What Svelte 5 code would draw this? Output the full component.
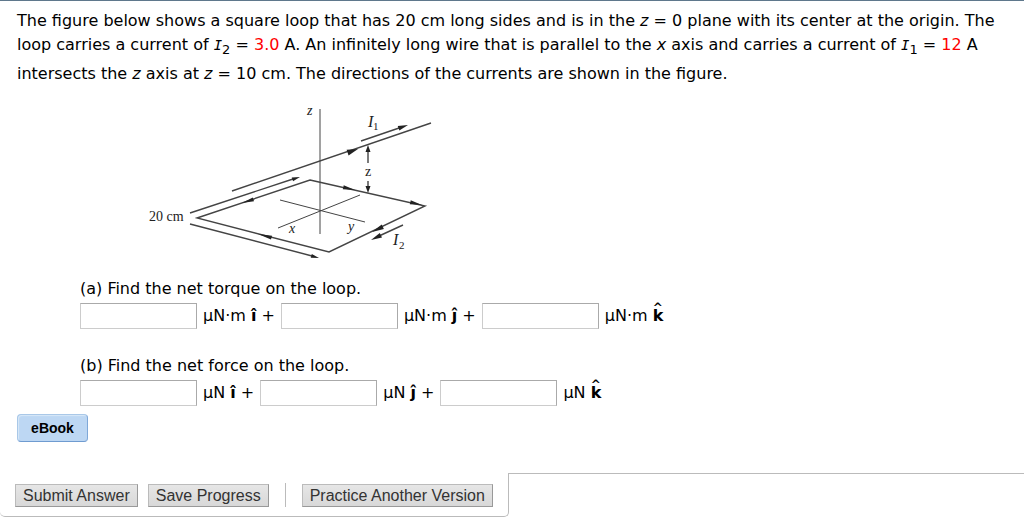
<script lang="ts">
  const parts = [
    { id: 'a', label: '(a) Find the net torque on the loop.', unit: 'µN·m' },
    { id: 'b', label: '(b) Find the net force on the loop.', unit: 'µN' }
  ];
  const vectors = ['î', 'ĵ', 'k'];

  // arrowheads of the figure: tip, direction in degrees, length, width
  const arrows = [
    { x: 358, y: 149, angle: -19, length: 11, width: 6 },
    { x: 408, y: 125, angle: -19, length: 10, width: 5 },
    { x: 300, y: 177, angle: -18, length: 8, width: 4 },
    { x: 319, y: 258, angle: 15, length: 8, width: 4 },
    { x: 242, y: 203, angle: 162, length: 12, width: 4 },
    { x: 258, y: 234, angle: 195, length: 14, width: 4 },
    { x: 355, y: 190, angle: 13, length: 12, width: 4 },
    { x: 422, y: 205, angle: 13, length: 12, width: 4 },
    { x: 372, y: 232, angle: 154, length: 12, width: 5 },
    { x: 371, y: 240, angle: 154, length: 11, width: 5 },
    { x: 368, y: 145, angle: -90, length: 7, width: 5 },
    { x: 368, y: 193, angle: 90, length: 7, width: 5 }
  ];

  let answers = $state(['', '', '', '', '', '']);
</script>

<main class="question">
  <div class="content">
    <p class="prompt">
      The figure below shows a square loop that has 20 cm long sides and is in the <i>z</i> = 0 plane with its center at the origin. The
      loop carries a current of <i class="current">I</i><sub>2</sub> = <span class="value">3.0</span> A. An infinitely long wire that is parallel to the <i>x</i> axis and carries a current of <i class="current">I</i><sub>1</sub> = <span class="value">12</span> A
      intersects the <i>z</i> axis at <i>z</i> = 10 cm. The directions of the currents are shown in the figure.
    </p>

    <svg class="figure" viewBox="140 100 300 165" role="img" aria-label="Square current loop below a long straight wire">
      <g class="lines">
        <path class="thin" d="M320 109V234M278 228L360 195M280 200L365 222" />
        <path d="M232 191L431 123" />
        <path d="M310 180L425 206L329 252L197 218Z" />
        <path d="M190 213L293 179M190 224L312 256M361 141L402 127M403 225L379 236" />
        <path d="M368 149V163M368 181V189" />
      </g>
      {#each arrows as a}
        <path d="M0 0L{-a.length} {-a.width / 2}V{a.width / 2}Z" transform="translate({a.x} {a.y}) rotate({a.angle})" />
      {/each}
      <text x="149" y="221">20 cm</text>
      <text class="symbol" x="307" y="115">z</text>
      <text class="symbol" x="289" y="233">x</text>
      <text class="symbol" x="348" y="231">y</text>
      <text x="365" y="176">z</text>
      <text class="symbol big" x="368" y="127">I</text>
      <text class="index" x="373" y="130">1</text>
      <text class="symbol big" x="393" y="245">I</text>
      <text class="index" x="399" y="249">2</text>
    </svg>

    <div class="parts">
      {#each parts as part, p}
        <section class="part">
          <div id="part-{part.id}">{part.label}</div>
          <div class="answer" role="group" aria-labelledby="part-{part.id}">
            {#each vectors as vector, v}
              <input id="{part.id}-{v}" type="text" bind:value={answers[p * 3 + v]} />
              <label for="{part.id}-{v}">{part.unit} <b class:hat={vector === 'k'}>{vector}</b>{v < 2 ? ' +' : ''}</label>
            {/each}
          </div>
        </section>
      {/each}
    </div>

    <button class="ebook" type="button">eBook</button>
  </div>

  <footer class="footer">
    <div class="actions">
      <button type="button">Submit Answer</button>
      <button type="button">Save Progress</button>
      <span class="divider"></span>
      <button type="button">Practice Another Version</button>
    </div>
    <div class="edge"></div>
  </footer>
</main>

<style>
  :global(body) {
    background: #fff;
  }

  .question {
    border-top: 1px solid #5f788c;
    color: #000;
    font: 16px/24px Verdana, 'DejaVu Sans', sans-serif;
  }

  .content {
    padding: 8px 17px 0;
  }

  .prompt {
    margin: 0;
  }

  .current {
    font-family: 'DejaVu Sans Mono', monospace;
    font-size: 14px;
  }

  sub {
    font-size: 13px;
  }

  .value {
    color: #f00;
  }

  .figure {
    display: block;
    width: 300px;
    margin: 14px 0 0 123px;
    fill: #222;
  }

  .lines {
    fill: none;
    stroke: #444;
    stroke-width: 1.4;
  }

  .thin {
    stroke-width: 1;
  }

  .figure text {
    font: 14px 'Liberation Serif', serif;
  }

  .figure .symbol {
    font-style: italic;
  }

  .figure .big {
    font-size: 16px;
  }

  .figure .index {
    font-size: 11px;
  }

  .parts {
    display: grid;
    gap: 25px;
    margin: 12px 0 8px 63px;
  }

  .answer {
    display: flex;
    align-items: center;
    gap: 6px;
    margin-top: 2px;
  }

  .answer input {
    box-sizing: border-box;
    width: 117px;
    height: 26px;
    padding: 2px;
    border: 1px solid;
    border-color: #aaa #aaa #ccc #ccc;
    background: #fff;
    font: inherit;
  }

  .hat {
    position: relative;
  }

  .hat::before {
    content: '^';
    position: absolute;
    top: -6px;
    left: 0;
    font-size: 12px;
    line-height: 16px;
  }

  .ebook {
    display: block;
    width: 71px;
    height: 28px;
    padding: 0;
    border: 1px solid;
    border-color: #a9c8e8 #7fa8d8 #6f9bd0 #a9c8e8;
    border-radius: 4px;
    background: #bdd7f3;
    box-shadow: inset 1px 1px 1px #d8e8f8;
    color: #000;
    font: bold 14px 'Liberation Sans', Arial, sans-serif;
  }

  .footer {
    display: flex;
    margin-top: 31px;
  }

  .actions {
    display: flex;
    align-items: center;
    gap: 10px;
    padding: 10px 15px 9px;
    border: solid #bbb;
    border-width: 0 1px 1px 0;
    border-radius: 0 0 5px 5px;
  }

  .actions button {
    height: 23px;
    padding: 2px 7px 0;
    border: 1px solid;
    border-color: #bbb #999 #999 #bbb;
    background: linear-gradient(#e6e6e6, #d8d8d8);
    color: #333;
    font: 16px 'Liberation Sans', Arial, sans-serif;
  }

  .divider {
    width: 1px;
    height: 24px;
    margin: 0 6px;
    background: #bbb;
  }

  .edge {
    flex: 1;
    border-top: 1px solid #bbb;
  }
</style>
